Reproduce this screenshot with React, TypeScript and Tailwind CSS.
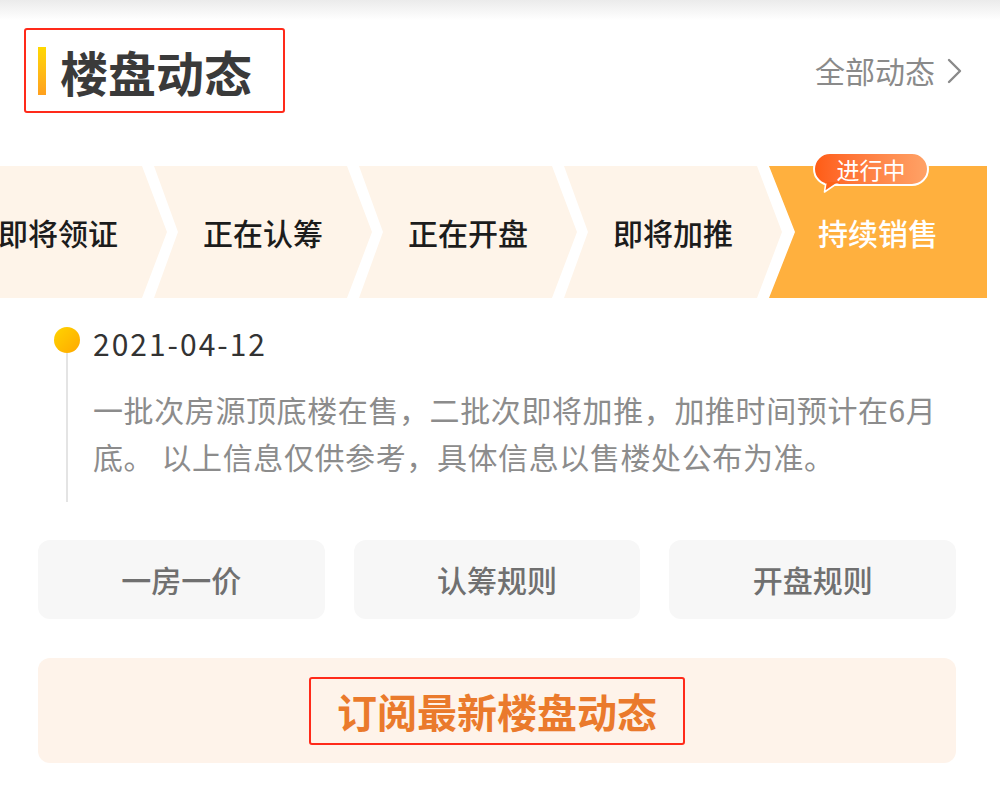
import React from 'react';

const steps = ['即将领证', '正在认筹', '正在开盘', '即将加推'];

function Segment({ label, first }: { label: string; first?: boolean }) {
  return (
    <div
      className={`${first ? 'ml-[-51px]' : 'ml-[-13px]'} w-[218px] h-[132px] shrink-0 bg-[#fef4e9] flex items-center justify-center [clip-path:polygon(0_0,193px_0,218px_50%,193px_100%,0_100%,24px_50%)]`}
    >
      <span className="text-[30px] font-medium text-[#1c1c1c]">{label}</span>
    </div>
  );
}

export default function App() {
  return (
    <div className="w-[1000px] h-[800px] bg-white overflow-hidden font-['Noto_Sans_CJK_SC','Noto_Sans',sans-serif]">
      <div className="h-[20px] bg-linear-to-b from-[#ebebeb] to-white" />

      <div className="mt-[8px] flex items-center justify-between pl-[24px] pr-[38px]">
        <div className="h-[85px] flex items-center border-2 border-[#ff2a1a] rounded-[3px] pl-[12px] pr-[31px]">
          <div className="w-[8px] h-[48px] bg-linear-to-b from-[#ffd800] to-[#ffa01e]" />
          <h2 className="ml-[14px] text-[48px] leading-none font-bold text-[#3a3a3a]">楼盘动态</h2>
        </div>
        <div className="flex items-center gap-[12px] text-[#8a8a8a]">
          <span className="text-[30px]">全部动态</span>
          <svg width="15" height="26" viewBox="0 0 15 26" fill="none" stroke="#8a8a8a" strokeWidth="2.4" strokeLinecap="round" strokeLinejoin="round">
            <path d="M2 2l11 11L2 24" />
          </svg>
        </div>
      </div>

      <div className="mt-[40px] pt-[13px] overflow-hidden">
        <div className="flex">
          {steps.map((s, i) => (
            <Segment key={s} label={s} first={i === 0} />
          ))}
          <div className="relative ml-[-13px] w-[218px] h-[132px] shrink-0">
            <div className="w-full h-full bg-[#ffb03e] flex items-center justify-center [clip-path:polygon(0_0,100%_0,100%_100%,0_100%,26px_50%)]">
              <span className="text-[30px] font-medium text-white">持续销售</span>
            </div>
            <div className="absolute left-[44px] top-[-14px] w-[116px] h-[34px] rounded-full border-2 border-white bg-linear-to-r from-[#ff5c14] to-[#ffa266] flex items-center justify-center">
              <span className="text-[23px] leading-none text-white">进行中</span>
              <svg className="absolute left-[8px] bottom-[-9px]" width="18" height="11" viewBox="0 0 18 11">
                <path d="M3 0 L16 0 L1.5 10 Z" fill="#ff6219" stroke="white" strokeWidth="1.6" strokeLinejoin="round" />
                <rect x="2" y="0" width="15" height="1.5" fill="#ff6219" />
              </svg>
            </div>
          </div>
        </div>
      </div>

      <div className="mt-[25px] flex pl-[54px] pr-[58px]">
        <div className="w-[26px] flex flex-col items-center">
          <div className="mt-[4px] w-[26px] h-[26px] rounded-full bg-linear-to-br from-[#ffd400] to-[#ffa800] shrink-0" />
          <div className="flex-1 w-[2px] bg-[#e4e4e4]" />
        </div>
        <div className="ml-[13px] flex-1 pb-[22px]">
          <div className="text-[30px] leading-[40px] tracking-[2px] text-[#333333]">2021-04-12</div>
          <p className="mt-[23px] text-[30px] leading-[47px] tracking-[0.6px] text-[#8c8c8c]">
            一批次房源顶底楼在售，二批次即将加推，加推时间预计在6月底。 以上信息仅供参考，具体信息以售楼处公布为准。
          </p>
        </div>
      </div>

      <div className="mt-[38px] ml-[38px] mr-[44px] grid grid-cols-3 gap-[29px]">
        {['一房一价', '认筹规则', '开盘规则'].map((t) => (
          <div key={t} className="h-[79px] rounded-[12px] bg-[#f7f7f7] flex items-center justify-center">
            <span className="text-[30px] font-medium text-[#707070]">{t}</span>
          </div>
        ))}
      </div>

      <div className="mt-[39px] ml-[38px] mr-[44px] h-[105px] rounded-[12px] bg-[#fef3ea] flex items-center justify-center">
        <div className="h-[68px] px-[26px] flex items-center border-2 border-[#ff2a1a] rounded-[3px]">
          <span className="text-[40px] leading-none font-semibold text-[#ea7a2c]">订阅最新楼盘动态</span>
        </div>
      </div>
    </div>
  );
}
